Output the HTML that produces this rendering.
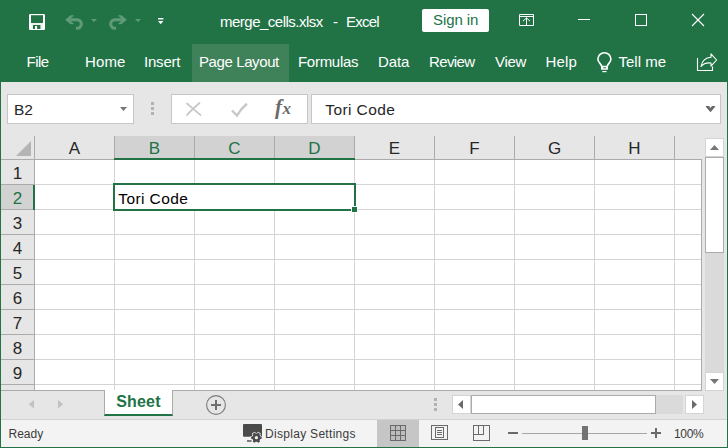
<!DOCTYPE html>
<html><head><meta charset="utf-8"><title>merge_cells.xlsx - Excel</title>
<style>
html,body{margin:0;padding:0;}
body{width:728px;height:448px;overflow:hidden;background:#e6e6e6;font-family:"Liberation Sans",sans-serif;position:relative;}
.abs,svg,.t,.box,.vl,.hl,.ch,.rh{position:absolute;}
svg{overflow:visible;}
#top{left:0;top:0;width:728px;height:82px;background:#217346;}
.t{white-space:nowrap;line-height:1;}
.m{font-size:15px;top:54px;color:#fff;}
#filetab{left:1px;top:44px;width:74px;height:38px;background:#217346;}
#pltab{left:192px;top:44px;width:97px;height:38px;background:#3f8159;}
#signin{left:422px;top:9px;width:67px;height:23px;background:#fff;border-radius:2px;}
.box{background:#fff;border:1px solid #c6c6c6;box-sizing:border-box;}
#grid{left:35px;top:160px;width:666px;height:230px;background:#fff;}
.vl{top:160px;width:1px;height:230px;background:#d4d4d4;}
.hl{left:35px;height:1px;width:666px;background:#d4d4d4;}
.hs{position:absolute;top:136px;width:1px;height:23px;background:#ababab;}
.rs{position:absolute;left:1px;width:33px;height:1px;background:#ababab;}
.ch{top:137px;height:22px;font-size:17px;color:#262626;text-align:center;line-height:23px;}
.rh{left:1px;width:33px;height:24px;font-size:17px;color:#262626;text-align:center;line-height:28px;}
.sel{background:#d2d2d2;color:#217346;}
.st{font-size:12px;color:#3b3b3b;top:428px;}
</style></head><body>
<div id="top" class="abs"></div>
<div id="filetab" class="abs"></div>
<div id="pltab" class="abs"></div>
<div id="signin" class="abs"></div>

<!-- quick access icons -->
<svg style="left:29px;top:14px" width="16" height="16" viewBox="0 0 16 16">
  <rect x="0" y="0" width="16" height="16" rx="1.2" fill="#fff"/>
  <rect x="2.5" y="9" width="11" height="6" fill="#efefef"/>
  <rect x="2" y="1.2" width="12" height="7.8" fill="#217346"/>
  <rect x="4" y="11" width="7.400" height="4" fill="#217346"/>
  <rect x="6" y="12" width="2.100" height="3" fill="#fff"/>
</svg>
<svg style="left:64px;top:14px" width="20" height="17" viewBox="0 0 20 17">
  <clipPath id="cu"><rect x="0" y="1.200" width="20" height="9"/></clipPath><path clip-path="url(#cu)" d="M9 0.700 L3.200 5.700 L9 10.700" fill="none" stroke="#5e9b78" stroke-width="2.600" stroke-linejoin="miter"/>
  <path d="M3 5.700 H13 A4.300 4.300 0 0 1 13 14.300 H12" fill="none" stroke="#5e9b78" stroke-width="3.100"/>
</svg>
<svg style="left:91px;top:19px" width="6" height="3" viewBox="0 0 6 3"><path d="M0 0h6l-3 3z" fill="#5e9b78"/></svg>
<svg style="left:108px;top:14px" width="20" height="17" viewBox="0 0 20 17">
  <path clip-path="url(#cu)" d="M11 0.700 L16.800 5.700 L11 10.700" fill="none" stroke="#5e9b78" stroke-width="2.600" stroke-linejoin="miter"/>
  <path d="M17 5.700 H7 A4.300 4.300 0 0 0 7 14.300 H8" fill="none" stroke="#5e9b78" stroke-width="3.100"/>
</svg>
<svg style="left:135px;top:19px" width="6" height="3" viewBox="0 0 6 3"><path d="M0 0h6l-3 3z" fill="#5e9b78"/></svg>
<svg style="left:158px;top:18px" width="6" height="7" viewBox="0 0 6 7"><path d="M0 0h5.400v1.500h-5.400z M0 3h5.400l-2.700 3.300z" fill="#fff"/></svg>

<span class="t" id="ti1" style="left:220px;top:14px;font-size:15px;color:#fff;letter-spacing:-0.5px;">merge_cells.xlsx</span>
<span class="t" id="ti2" style="left:333px;top:14px;font-size:15px;color:#fff;">-</span>
<span class="t" id="ti3" style="left:346px;top:14px;font-size:15px;color:#fff;letter-spacing:-0.75px;">Excel</span>
<span class="t" id="si" style="left:433px;top:12px;font-size:15px;color:#217346;letter-spacing:-0.1px;">Sign in</span>

<!-- window controls -->
<svg style="left:519px;top:14px" width="16" height="13" viewBox="0 0 16 13">
  <path d="M0.5 0.5h14v11h-14z M0.5 2.5h14 M7.5 11V4 M4 7.2l3.5-3.4 3.5 3.4" fill="none" stroke="#fff" stroke-width="1"/>
</svg>
<div class="abs" style="left:578px;top:19px;width:12px;height:1px;background:#fff;"></div>
<div class="abs" style="left:635px;top:14px;width:12px;height:12px;border:1px solid #fff;box-sizing:border-box;"></div>
<svg style="left:692px;top:14px" width="12" height="12" viewBox="0 0 12 12"><path d="M0 0L12 12M12 0L0 12" stroke="#fff" stroke-width="1.1" fill="none"/></svg>

<!-- menu -->
<span class="t m" id="m1" style="left:26.5px;letter-spacing:-0.5px;">File</span>
<span class="t m" id="m2" style="left:85px;letter-spacing:0.15px;">Home</span>
<span class="t m" id="m3" style="left:144px;letter-spacing:-0.2px;">Insert</span>
<span class="t m" id="m4" style="left:199px;letter-spacing:-0.4px;">Page Layout</span>
<span class="t m" id="m5" style="left:298px;letter-spacing:-0.29px;">Formulas</span>
<span class="t m" id="m6" style="left:378px;letter-spacing:-0.1px;">Data</span>
<span class="t m" id="m7" style="left:429px;letter-spacing:-0.6px;">Review</span>
<span class="t m" id="m8" style="left:495px;letter-spacing:-0.33px;">View</span>
<span class="t m" id="m9" style="left:545.5px;letter-spacing:0.17px;">Help</span>
<span class="t m" id="m10" style="left:618.5px;">Tell me</span>
<!-- bulb -->
<svg style="left:596px;top:51px" width="17" height="22" viewBox="0 0 17 22">
  <path d="M5.600 15.500 C5.600 13 1.900 11.500 1.900 8.200 A6.500 6.500 0 0 1 14.900 8.200 C14.900 11.500 11.300 13 11.300 15.500" fill="none" stroke="#fff" stroke-width="1.600"/>
  <rect x="5" y="14.800" width="6.900" height="4" rx="0.600" fill="#fff"/>
  <rect x="7.200" y="16.300" width="2.800" height="1" fill="#217346"/>
  <path d="M6.300 20.600h4.200" stroke="#fff" stroke-width="1.200" fill="none"/>
</svg>
<!-- share -->
<svg style="left:696px;top:52px" width="22" height="20" viewBox="0 0 22 20">
  <path d="M1.500 6v12.500h15v-4" fill="none" stroke="#fff" stroke-width="1.100"/>
  <path d="M15 1.800 L20.600 8 L15 14.200 V11 C10 10.500 7 12 5 14.500 C6 9 9.500 5.500 15 5.200 Z" fill="none" stroke="#fff" stroke-width="1.100" stroke-linejoin="round"/>
</svg>

<!-- formula bar -->
<div class="box" style="left:7px;top:94px;width:127px;height:30px;"></div>
<span class="t" id="nb" style="left:14px;top:102px;font-size:15.5px;color:#262626;">B2</span>
<svg style="left:120px;top:107px" width="7" height="4" viewBox="0 0 7 4"><path d="M0 0h7l-3.500 4z" fill="#777"/></svg>
<div class="abs" style="left:151px;top:102px;width:3px;height:3px;background:#b2b2b2;box-shadow:0 5px 0 #b2b2b2,0 10px 0 #b2b2b2;"></div>
<div class="box" style="left:171px;top:94px;width:137px;height:30px;"></div>
<svg style="left:186px;top:102px" width="16" height="14" viewBox="0 0 16 14"><path d="M1 1.500C5 5 10 9.500 14.500 13 M13.500 1C9 5 4.500 9 1 13" stroke="#c8c8c8" stroke-width="1.800" fill="none" stroke-linecap="round"/></svg>
<svg style="left:231px;top:103px" width="17" height="14" viewBox="0 0 17 14"><path d="M1 7.500L6 12.500C8.500 8 12 4 16 0.800" stroke="#c8c8c8" stroke-width="2.400" fill="none" stroke-linejoin="miter"/></svg>
<span class="t" id="fx" style="left:275px;top:97px;font-size:21px;font-family:'Liberation Serif',serif;font-style:italic;font-weight:bold;color:#6a6a6a;">f<span style="font-size:17px;margin-left:0.5px">x</span></span>
<div class="box" style="left:311px;top:94px;width:410px;height:30px;"></div>
<span class="t" id="ft" style="left:325.3px;top:102px;font-size:15.5px;color:#262626;letter-spacing:0.4px;">Tori Code</span>
<svg style="left:706px;top:106px" width="9" height="6" viewBox="0 0 9 6"><path d="M-0.200 0h3.300l1.400 1.900 1.400-1.900h3.300v0.700l-4.700 5.500l-4.700-5.500z" fill="#6a6a6a"/></svg>

<!-- grid -->
<div id="grid" class="abs"></div>
<div class="ch" style="left:35px;width:79px;">A</div>
<div class="ch sel" style="left:115px;width:79px;">B</div>
<div class="ch sel" style="left:195px;width:79px;">C</div>
<div class="ch sel" style="left:275px;width:79px;">D</div>
<div class="ch" style="left:355px;width:79px;">E</div>
<div class="ch" style="left:435px;width:79px;">F</div>
<div class="ch" style="left:515px;width:79px;">G</div>
<div class="ch" style="left:595px;width:79px;">H</div>
<div class="abs sel" style="left:115px;top:136px;width:239px;height:1px;"></div>
<div class="hs" style="left:34px;"></div><div class="hs" style="left:114px;"></div><div class="hs" style="left:194px;"></div><div class="hs" style="left:274px;"></div><div class="hs" style="left:354px;"></div><div class="hs" style="left:434px;"></div><div class="hs" style="left:514px;"></div><div class="hs" style="left:594px;"></div><div class="hs" style="left:674px;"></div>
<svg style="left:16px;top:141px" width="15" height="15" viewBox="0 0 15 15"><path d="M15 0v15h-15z" fill="#b4b4b4"/></svg>

<div class="rh" style="top:160px;">1</div>
<div class="rh sel" style="top:185px;">2</div>
<div class="rh" style="top:210px;">3</div>
<div class="rh" style="top:235px;">4</div>
<div class="rh" style="top:260px;">5</div>
<div class="rh" style="top:285px;">6</div>
<div class="rh" style="top:310px;">7</div>
<div class="rh" style="top:335px;">8</div>
<div class="rh" style="top:360px;">9</div>
<div class="abs" style="left:1px;top:385px;width:33px;height:5px;background:#e6e6e6;"></div>
<div class="rs" style="top:184px;"></div><div class="rs" style="top:209px;"></div><div class="rs" style="top:234px;"></div><div class="rs" style="top:259px;"></div><div class="rs" style="top:284px;"></div><div class="rs" style="top:309px;"></div><div class="rs" style="top:334px;"></div><div class="rs" style="top:359px;"></div><div class="rs" style="top:384px;"></div>
<!-- header borders -->
<div class="abs" style="left:1px;top:159px;width:701px;height:1px;background:#ababab;"></div>
<div class="abs" style="left:34px;top:160px;width:1px;height:231px;background:#ababab;"></div>
<div class="abs" style="left:701px;top:159px;width:1px;height:232px;background:#ababab;"></div>
<div class="abs" style="left:1px;top:390px;width:701px;height:1px;background:#ababab;"></div>
<!-- gridlines -->
<div class="vl" style="left:114px;"></div><div class="vl" style="left:194px;"></div><div class="vl" style="left:274px;"></div><div class="vl" style="left:354px;"></div><div class="vl" style="left:434px;"></div><div class="vl" style="left:514px;"></div><div class="vl" style="left:594px;"></div><div class="vl" style="left:674px;"></div>
<div class="hl" style="top:184px;"></div><div class="hl" style="top:209px;"></div><div class="hl" style="top:234px;"></div><div class="hl" style="top:259px;"></div><div class="hl" style="top:284px;"></div><div class="hl" style="top:309px;"></div><div class="hl" style="top:334px;"></div><div class="hl" style="top:359px;"></div><div class="hl" style="top:384px;"></div>
<!-- selected header accents -->
<div class="abs" style="left:114px;top:158px;width:241px;height:2px;background:#217346;"></div>
<div class="abs" style="left:33px;top:185px;width:2px;height:25px;background:#217346;"></div>
<!-- merged cell -->
<div class="abs" style="left:113px;top:183px;width:243px;height:28px;border:2px solid #217346;box-sizing:border-box;background:#fff;"></div>
<div class="abs" style="left:351px;top:206px;width:7px;height:7px;background:#fff;"></div>
<div class="abs" style="left:352px;top:207px;width:5px;height:5px;background:#217346;"></div>
<span class="t" id="ct" style="left:118.3px;top:191px;font-size:15.5px;color:#000;letter-spacing:0.4px;">Tori Code</span>

<!-- vertical scrollbar -->
<div class="abs" style="left:705px;top:138px;width:19px;height:253px;background:#dadada;"></div>
<div class="box" style="left:705px;top:138px;width:19px;height:19px;border-color:#d4d4d4;"></div>
<svg style="left:710px;top:145px" width="9" height="5" viewBox="0 0 9 5"><path d="M0 5h9l-4.500-5z" fill="#777"/></svg>
<div class="box" style="left:705px;top:157px;width:19px;height:96px;border-color:#ababab;"></div>
<div class="box" style="left:705px;top:372px;width:19px;height:19px;border-color:#d4d4d4;"></div>
<svg style="left:710px;top:379px" width="9" height="5" viewBox="0 0 9 5"><path d="M0 0h9l-4.500 5z" fill="#777"/></svg>

<!-- sheet tabs row -->
<svg style="left:28px;top:400px" width="6" height="9" viewBox="0 0 6 9"><path d="M6 0v8.600l-5.300-4.300z" fill="#c2c2c2"/></svg>
<svg style="left:58px;top:400px" width="6" height="9" viewBox="0 0 6 9"><path d="M0 0v8.600l5.200-4.300z" fill="#c2c2c2"/></svg>
<div class="abs" style="left:104px;top:390px;width:69px;height:26px;background:#fff;border-left:1px solid #ababab;border-right:1px solid #ababab;border-bottom:2px solid #217346;box-sizing:border-box;"></div>
<span class="t" id="sh" style="left:116.3px;top:394px;font-size:16px;font-weight:bold;color:#217346;letter-spacing:0.15px;">Sheet</span>
<svg style="left:206px;top:395px" width="20" height="20" viewBox="0 0 20 20"><circle cx="10" cy="10" r="9.400" fill="none" stroke="#7a7a7a" stroke-width="1.100"/><path d="M5 10h10M10 5v10" stroke="#6e6e6e" stroke-width="2"/></svg>
<div class="abs" style="left:434px;top:398px;width:3px;height:3px;background:#b2b2b2;box-shadow:0 5px 0 #b2b2b2,0 10px 0 #b2b2b2;"></div>
<!-- horizontal scrollbar -->
<div class="abs" style="left:471px;top:395px;width:212px;height:19px;background:#dadada;"></div>
<div class="box" style="left:452px;top:395px;width:19px;height:19px;border-color:#d4d4d4;"></div>
<svg style="left:458px;top:400px" width="5" height="9" viewBox="0 0 5 9"><path d="M5 0v9l-5-4.500z" fill="#6a6a6a"/></svg>
<div class="box" style="left:471px;top:395px;width:185px;height:19px;border-color:#ababab;"></div>
<div class="box" style="left:685px;top:395px;width:19px;height:19px;border-color:#d4d4d4;"></div>
<svg style="left:692px;top:400px" width="5" height="9" viewBox="0 0 5 9"><path d="M0 0v9l5-4.500z" fill="#6a6a6a"/></svg>

<!-- status bar -->
<div class="abs" style="left:1px;top:419px;width:726px;height:28px;background:#f3f3f3;border-top:1px solid #d2d2d2;box-sizing:border-box;"></div>
<span class="t st" id="s1" style="left:8.500px;">Ready</span>
<svg style="left:243px;top:424px" width="20" height="20" viewBox="0 0 20 20">
  <rect x="0" y="0" width="19" height="12.800" rx="1" fill="#4a4a4a"/>
  <path d="M4 17h4.500" stroke="#4a4a4a" stroke-width="1.400"/>
  <path d="M17.39 12.40 L18.68 12.58 L18.68 14.82 L17.39 15.00 L16.52 16.51 L17.01 17.71 L15.07 18.84 L14.27 17.81 L12.53 17.81 L11.73 18.84 L9.79 17.71 L10.28 16.51 L9.41 15.00 L8.12 14.82 L8.12 12.58 L9.41 12.40 L10.28 10.89 L9.79 9.69 L11.73 8.56 L12.53 9.59 L14.27 9.59 L15.07 8.56 L17.01 9.69 L16.52 10.89Z" fill="#4a4a4a" stroke="#f3f3f3" stroke-width="1.400" stroke-linejoin="round" paint-order="stroke"/>
  <circle cx="13.4" cy="13.7" r="1.600" fill="#f3f3f3"/>
</svg>
<span class="t st" id="s2" style="left:265px;letter-spacing:0.3px;">Display Settings</span>
<div class="abs" style="left:377px;top:420px;width:42px;height:27px;background:#c6c6c6;"></div>
<svg style="left:390px;top:425px" width="16" height="16" viewBox="0 0 16 16"><rect x="0.500" y="0.500" width="15" height="15" fill="#bdbdbd" stroke="#6a6a6a"/><path d="M5.500 0v16M10.500 0v16M0 5.500h16M0 10.500h16" stroke="#6a6a6a"/></svg>
<svg style="left:431px;top:425px" width="17" height="15" viewBox="0 0 17 15"><rect x="0.500" y="0.500" width="16" height="14" fill="none" stroke="#6a6a6a"/><rect x="4.500" y="2.500" width="8" height="10" fill="none" stroke="#6a6a6a"/><path d="M6 5.500h5M6 7.500h5M6 9.500h5" stroke="#6a6a6a"/></svg>
<svg style="left:473px;top:425px" width="17" height="16" viewBox="0 0 17 16"><rect x="0.500" y="0.500" width="16" height="15" fill="none" stroke="#6a6a6a"/><path d="M5.500 0v9.500M10.500 0v9.500M0 9.500h11" stroke="#6a6a6a" fill="none"/></svg>
<div class="abs" style="left:508px;top:432px;width:10px;height:2px;background:#6a6a6a;"></div>
<div class="abs" style="left:522px;top:433px;width:125px;height:1px;background:#a6a6a6;"></div>
<div class="abs" style="left:582px;top:426px;width:6px;height:14px;background:#737373;"></div>
<div class="abs" style="left:651px;top:432px;width:10px;height:2px;background:#6a6a6a;"></div>
<div class="abs" style="left:655px;top:428px;width:2px;height:10px;background:#6a6a6a;"></div>
<span class="t st" id="s3" style="left:674px;letter-spacing:-0.33px;">100%</span>

<!-- window border -->
<div class="abs" style="left:0;top:0;width:1px;height:448px;background:#217346;"></div>
<div class="abs" style="left:727px;top:0;width:1px;height:448px;background:#217346;"></div>
<div class="abs" style="left:0;top:447px;width:728px;height:1px;background:#217346;"></div>
</body></html>
